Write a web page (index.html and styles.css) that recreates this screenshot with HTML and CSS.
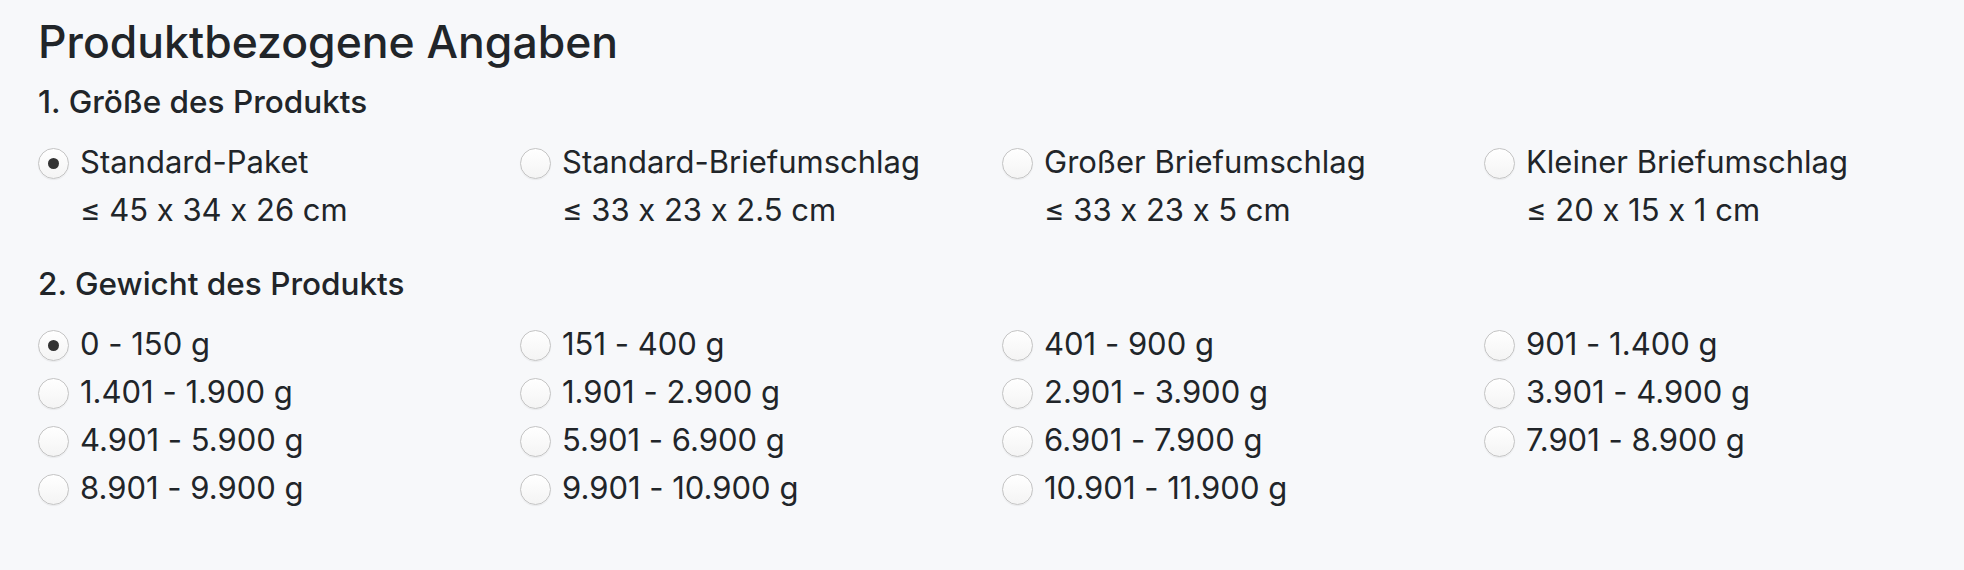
FILE: index.html
```html
<!DOCTYPE html>
<html lang="de">
<head>
    <meta charset="UTF-8">
    <meta name="viewport" content="width=device-width, initial-scale=1.0">
    <title>Produktbezogene Angaben</title>
    <link rel="stylesheet" href="styles.css">
</head>
<body>
    <div class="page">
        <h1>Produktbezogene Angaben</h1>

        <h2 class="section-title">1. Größe des Produkts</h2>
        <div class="options">
            <label class="option">
                <input type="radio" name="size" checked>
                <span class="option-text">
                    <span>Standard-Paket</span>
                    <span>≤ 45 x 34 x 26 cm</span>
                </span>
            </label>
            <label class="option">
                <input type="radio" name="size">
                <span class="option-text">
                    <span>Standard-Briefumschlag</span>
                    <span>≤ 33 x 23 x 2.5 cm</span>
                </span>
            </label>
            <label class="option">
                <input type="radio" name="size">
                <span class="option-text">
                    <span>Großer Briefumschlag</span>
                    <span>≤ 33 x 23 x 5 cm</span>
                </span>
            </label>
            <label class="option">
                <input type="radio" name="size">
                <span class="option-text">
                    <span>Kleiner Briefumschlag</span>
                    <span>≤ 20 x 15 x 1 cm</span>
                </span>
            </label>
        </div>

        <h2 class="section-title weight-title">2. Gewicht des Produkts</h2>
        <div class="options">
            <label class="option"><input type="radio" name="weight" checked><span class="option-text">0 - 150 g</span></label>
            <label class="option"><input type="radio" name="weight"><span class="option-text">151 - 400 g</span></label>
            <label class="option"><input type="radio" name="weight"><span class="option-text">401 - 900 g</span></label>
            <label class="option"><input type="radio" name="weight"><span class="option-text">901 - 1.400 g</span></label>
            <label class="option"><input type="radio" name="weight"><span class="option-text">1.401 - 1.900 g</span></label>
            <label class="option"><input type="radio" name="weight"><span class="option-text">1.901 - 2.900 g</span></label>
            <label class="option"><input type="radio" name="weight"><span class="option-text">2.901 - 3.900 g</span></label>
            <label class="option"><input type="radio" name="weight"><span class="option-text">3.901 - 4.900 g</span></label>
            <label class="option"><input type="radio" name="weight"><span class="option-text">4.901 - 5.900 g</span></label>
            <label class="option"><input type="radio" name="weight"><span class="option-text">5.901 - 6.900 g</span></label>
            <label class="option"><input type="radio" name="weight"><span class="option-text">6.901 - 7.900 g</span></label>
            <label class="option"><input type="radio" name="weight"><span class="option-text">7.901 - 8.900 g</span></label>
            <label class="option"><input type="radio" name="weight"><span class="option-text">8.901 - 9.900 g</span></label>
            <label class="option"><input type="radio" name="weight"><span class="option-text">9.901 - 10.900 g</span></label>
            <label class="option"><input type="radio" name="weight"><span class="option-text">10.901 - 11.900 g</span></label>
        </div>
    </div>
</body>
</html>
```

FILE: styles.css
```css
body {
    margin: 0;
    font-family: Inter, "Liberation Sans", sans-serif;
    font-feature-settings: "calt" 0;
    background-color: #f7f8fa;
    color: #212529;
}
.page {
    padding: 14px 0 0 38px;
}
h1 {
    font-size: 44.5px;
    font-weight: 500;
    line-height: 56px;
    margin: 0 0 8px;
}
.section-title {
    font-size: 31.5px;
    font-weight: 500;
    line-height: 48px;
    margin: 0 0 12px;
}
.weight-title {
    margin-top: 26px;
}
.options {
    display: grid;
    grid-template-columns: repeat(4, 482px);
}
.option {
    display: flex;
    align-items: flex-start;
    gap: 11px;
    font-size: 31px;
    line-height: 48px;
    cursor: pointer;
}
.option-text {
    display: flex;
    flex-direction: column;
}
.option input {
    appearance: none;
    -webkit-appearance: none;
    flex: none;
    width: 31px;
    height: 31px;
    margin: 10px 0 0;
    border: 1px solid #c4c4c4;
    border-radius: 50%;
    background: linear-gradient(#ffffff, #f4f4f4);
    box-shadow: 0 1px 1px rgba(0, 0, 0, 0.06);
    position: relative;
}
.option input:checked::after {
    content: "";
    position: absolute;
    top: 9px;
    left: 9px;
    width: 11px;
    height: 11px;
    border-radius: 50%;
    background-color: #333;
}
```
